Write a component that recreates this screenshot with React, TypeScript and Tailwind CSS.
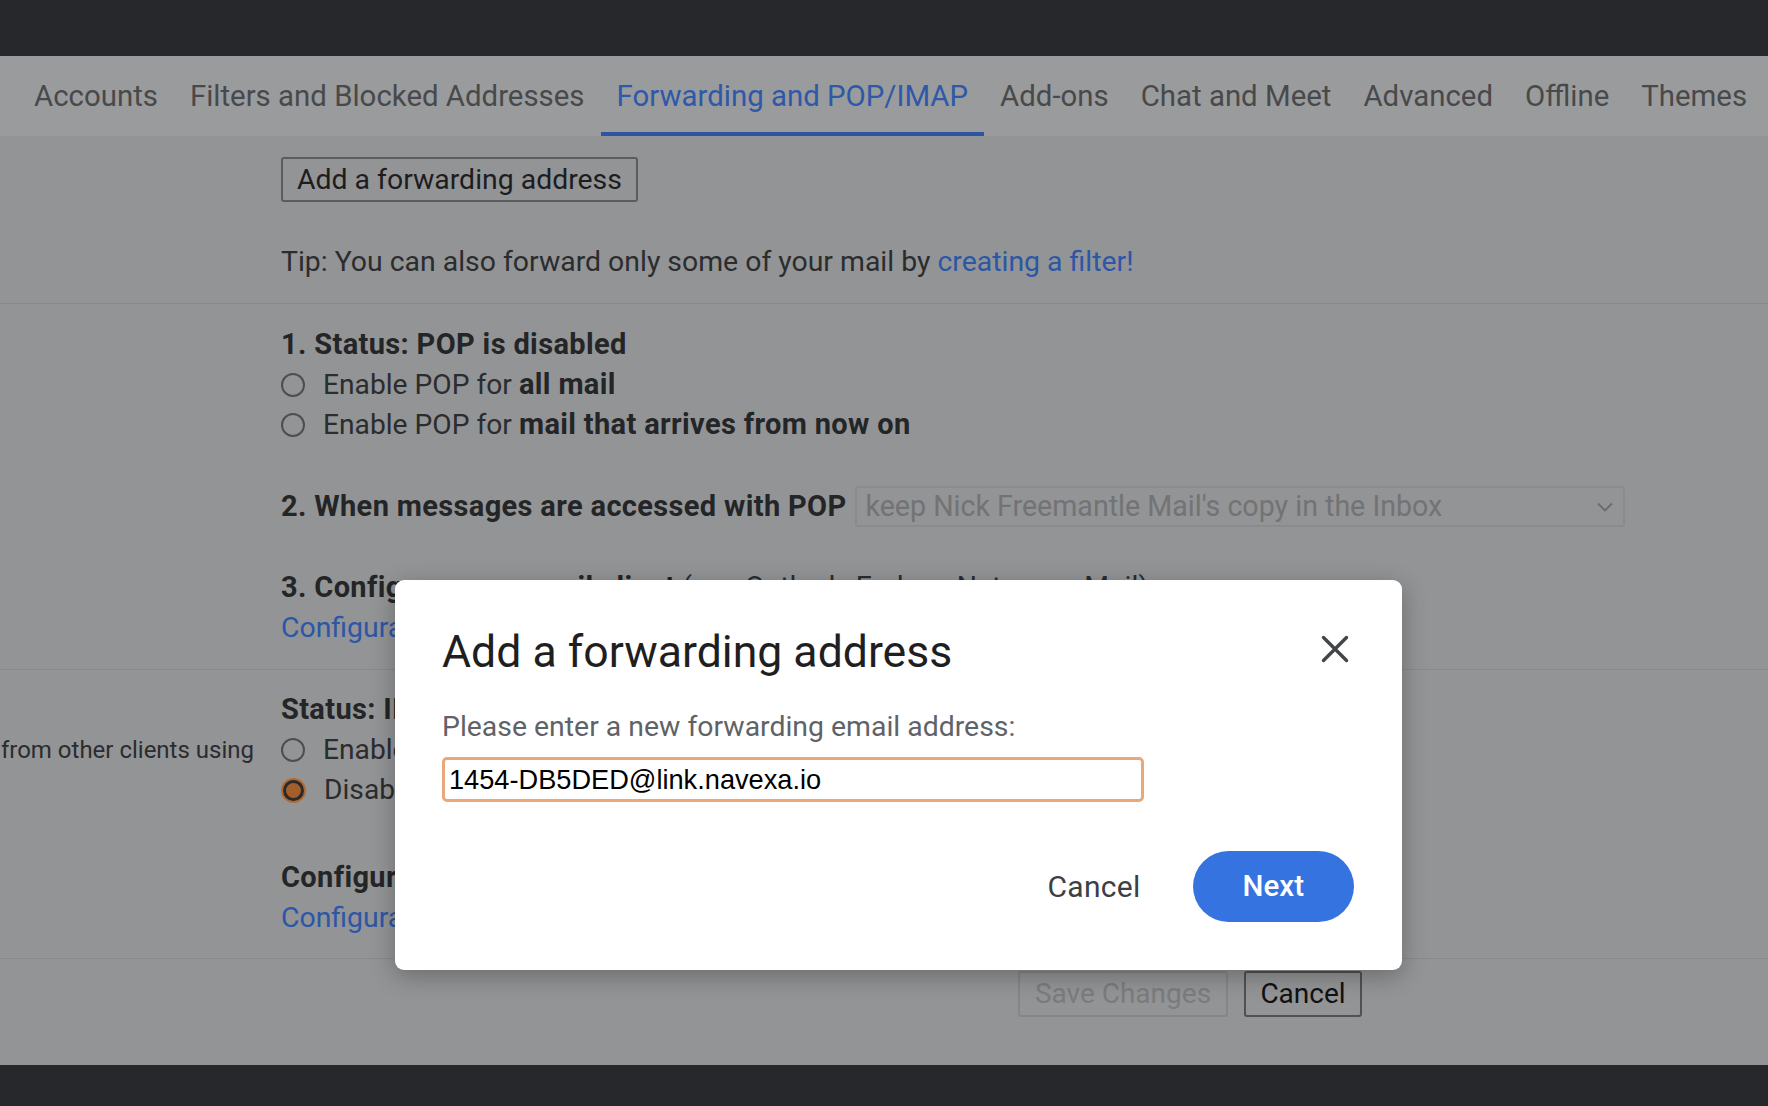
import { useState } from 'react';

// --- settings tabs ---
const tabs = [
  'Accounts',
  'Filters and Blocked Addresses',
  'Forwarding and POP/IMAP',
  'Add-ons',
  'Chat and Meet',
  'Advanced',
  'Offline',
  'Themes',
];

const body = "font-['Roboto','Noto_Sans',sans-serif]";
const strong = 'text-[29px] tracking-[0.35px] font-bold text-[#242527]';

// Radio button as seen under the modal backdrop
const Radio = ({ checked }: { checked?: boolean }) =>
  checked ? (
    <span className="w-[25px] h-[25px] rounded-full bg-[#ad6a35] p-[2px] shrink-0 flex">
      <span className="w-full h-full rounded-full border-[3px] border-[#2c2a29] bg-[#a25f2c]" />
    </span>
  ) : (
    <span className="w-[24px] h-[24px] rounded-full border-2 border-[#4d4e50] shrink-0" />
  );

const RadioRow = ({ checked, children }: { checked?: boolean; children: React.ReactNode }) => (
  <div className="h-[40px] flex items-center gap-[18px]">
    <Radio checked={checked} />
    <span className="text-[28.2px] text-[#2b2c2e] whitespace-nowrap">{children}</span>
  </div>
);

// Row with the left label column and the content column
const Row = ({ label, children }: { label?: React.ReactNode; children: React.ReactNode }) => (
  <div className="flex">
    <div className="w-[281px] shrink-0 flex items-center justify-end pr-[27px] text-[24px] text-[#2b2c2e] whitespace-nowrap overflow-hidden">
      {label}
    </div>
    <div className="flex-1 min-w-0">{children}</div>
  </div>
);

function ForwardDialog() {
  const [email, setEmail] = useState('1454-DB5DED@link.navexa.io');

  return (
    <div className="absolute left-[395px] top-[524px] w-[1007px] h-[390px] bg-white rounded-[9px] shadow-[0_6px_24px_rgba(0,0,0,0.28)] pt-[46px] pl-[47px] pr-[48px] pb-[48px] flex flex-col">
      <div className="flex items-center justify-between">
        <h2 className="text-[44.6px] leading-[52px] text-[#1f1f1f]">Add a forwarding address</h2>
        <button className="w-[28px] h-[28px] mr-[5px] -mt-[6px] text-[#444546]" aria-label="Close">
          <svg viewBox="0 0 28 28" width="28" height="28" fill="none" stroke="currentColor" strokeWidth="3.4" strokeLinecap="round">
            <path d="M2.5 2.5 L25.5 25.5 M25.5 2.5 L2.5 25.5" />
          </svg>
        </button>
      </div>
      <p className="mt-[29px] text-[28.4px] leading-[40px] text-[#5f6368]">
        Please enter a new forwarding email address:
      </p>
      <input
        value={email}
        onChange={(e) => setEmail(e.target.value)}
        className="mt-[10px] w-[702px] h-[45px] border-[3px] border-[#e9a77a] rounded-[5px] px-[4px] text-[27.2px] text-black outline-none font-['Liberation_Sans',Arial,sans-serif]"
      />
      <div className="mt-[49px] flex items-center justify-end gap-[28px]">
        <button className="h-[71px] px-6 text-[30px] tracking-[0.3px] text-[#3c4043]">Cancel</button>
        <button className="h-[71px] px-[50px] rounded-full bg-[#3574e0] text-[29.5px] font-medium text-white">
          Next
        </button>
      </div>
    </div>
  );
}

export default function App() {
  return (
    <div className={`w-full h-[1106px] flex flex-col bg-[#27282b] overflow-hidden ${body}`}>
      <div className="h-[56px] shrink-0 bg-[#27282b]" />

      <div className="relative h-[1009px] shrink-0 bg-[#939496] overflow-hidden">
        {/* Tabs */}
        <nav className="h-[80px] bg-[#9a9b9d] flex pl-[18px] whitespace-nowrap">
          {tabs.map((t) => {
            const active = t === 'Forwarding and POP/IMAP';
            return (
              <div
                key={t}
                className={`h-full px-4 flex items-center text-[29.4px] border-b-4 ${
                  active ? 'border-[#2c54a2] text-[#2e58a8]' : 'border-transparent text-[#48494b]'
                }`}
              >
                <span className="pt-[4px]">{t}</span>
              </div>
            );
          })}
        </nav>

        {/* Forwarding */}
        <section className="pt-[21px] pb-[21px]">
          <Row>
            <button className="h-[45px] px-[14px] border-2 border-[#5b5c5e] rounded-[3px] text-[28.4px] text-[#1d1d1f]">
              Add a forwarding address
            </button>
            <p className="mt-[40px] leading-[40px] text-[28.4px] text-[#2b2c2e]">
              Tip: You can also forward only some of your mail by{' '}
              <a className="text-[#2c56a6]">creating a filter!</a>
            </p>
          </Row>
        </section>

        {/* POP */}
        <section className="border-t border-[#88898b] pt-[20px] pb-[20px]">
          <Row>
            <div className={`h-[41px] flex items-center ${strong}`}>1. Status: POP is disabled</div>
            <RadioRow>
              Enable POP for <b className={strong}>all mail</b>
            </RadioRow>
            <RadioRow>
              Enable POP for <b className={strong}>mail that arrives from now on</b>
            </RadioRow>
            <div className="mt-[41px] h-[41px] flex items-center gap-[9px]">
              <span className={`whitespace-nowrap ${strong}`}>2. When messages are accessed with POP</span>
              <div className="w-[770px] h-[41px] border-2 border-[#8a8b8d] rounded-[3px] flex items-center justify-between pl-[8px] pr-[10px]">
                <span className="text-[28.6px] text-[#727375] whitespace-nowrap">
                  keep Nick Freemantle Mail's copy in the Inbox
                </span>
                <svg width="16" height="10" viewBox="0 0 16 10" fill="none" stroke="#6a6b6d" strokeWidth="1.8">
                  <path d="M1 1.5 L8 8.5 L15 1.5" />
                </svg>
              </div>
            </div>
            <div className="mt-[40px] h-[41px] flex items-center text-[28.4px] text-[#2b2c2e] whitespace-nowrap">
              <b className={strong}>3. Configure your email client</b>&nbsp;(e.g. Outlook, Eudora, Netscape Mail)
            </div>
            <div className="h-[41px] flex items-center text-[28.4px] text-[#2c56a6]">Configuration instructions</div>
          </Row>
        </section>

        {/* IMAP */}
        <section className="border-t border-[#88898b] pt-[19px] pb-[19px]">
          <div className="flex flex-col">
            <Row>
              <div className={`h-[41px] flex items-center ${strong}`}>Status: IMAP is disabled</div>
            </Row>
            <Row label="from other clients using">
              <RadioRow>Enable IMAP</RadioRow>
            </Row>
            <Row>
              <RadioRow checked>Disable IMAP</RadioRow>
            </Row>
            <Row>
              <div className={`mt-[47px] h-[41px] flex items-center whitespace-nowrap ${strong}`}>
                Configure your email client
                <span className="font-normal tracking-normal text-[28.4px] text-[#2b2c2e]">
                  &nbsp;(e.g. Outlook, Thunderbird, iPhone)
                </span>
              </div>
              <div className="h-[41px] flex items-center text-[28.4px] text-[#2c56a6]">Configuration instructions</div>
            </Row>
          </div>
        </section>

        {/* Footer */}
        <footer className="border-t border-[#88898b] pt-[12px] pl-[1018px] flex gap-4">
          <button className="h-[46px] w-[210px] border-2 border-[#858688] rounded-[3px] text-[28px] text-[#7b7c7e]">
            Save Changes
          </button>
          <button className="h-[46px] w-[118px] border-2 border-[#505153] rounded-[3px] text-[28px] text-[#111]">
            Cancel
          </button>
        </footer>

        <ForwardDialog />
      </div>

      <div className="flex-1 bg-[#27282b]" />
    </div>
  );
}
